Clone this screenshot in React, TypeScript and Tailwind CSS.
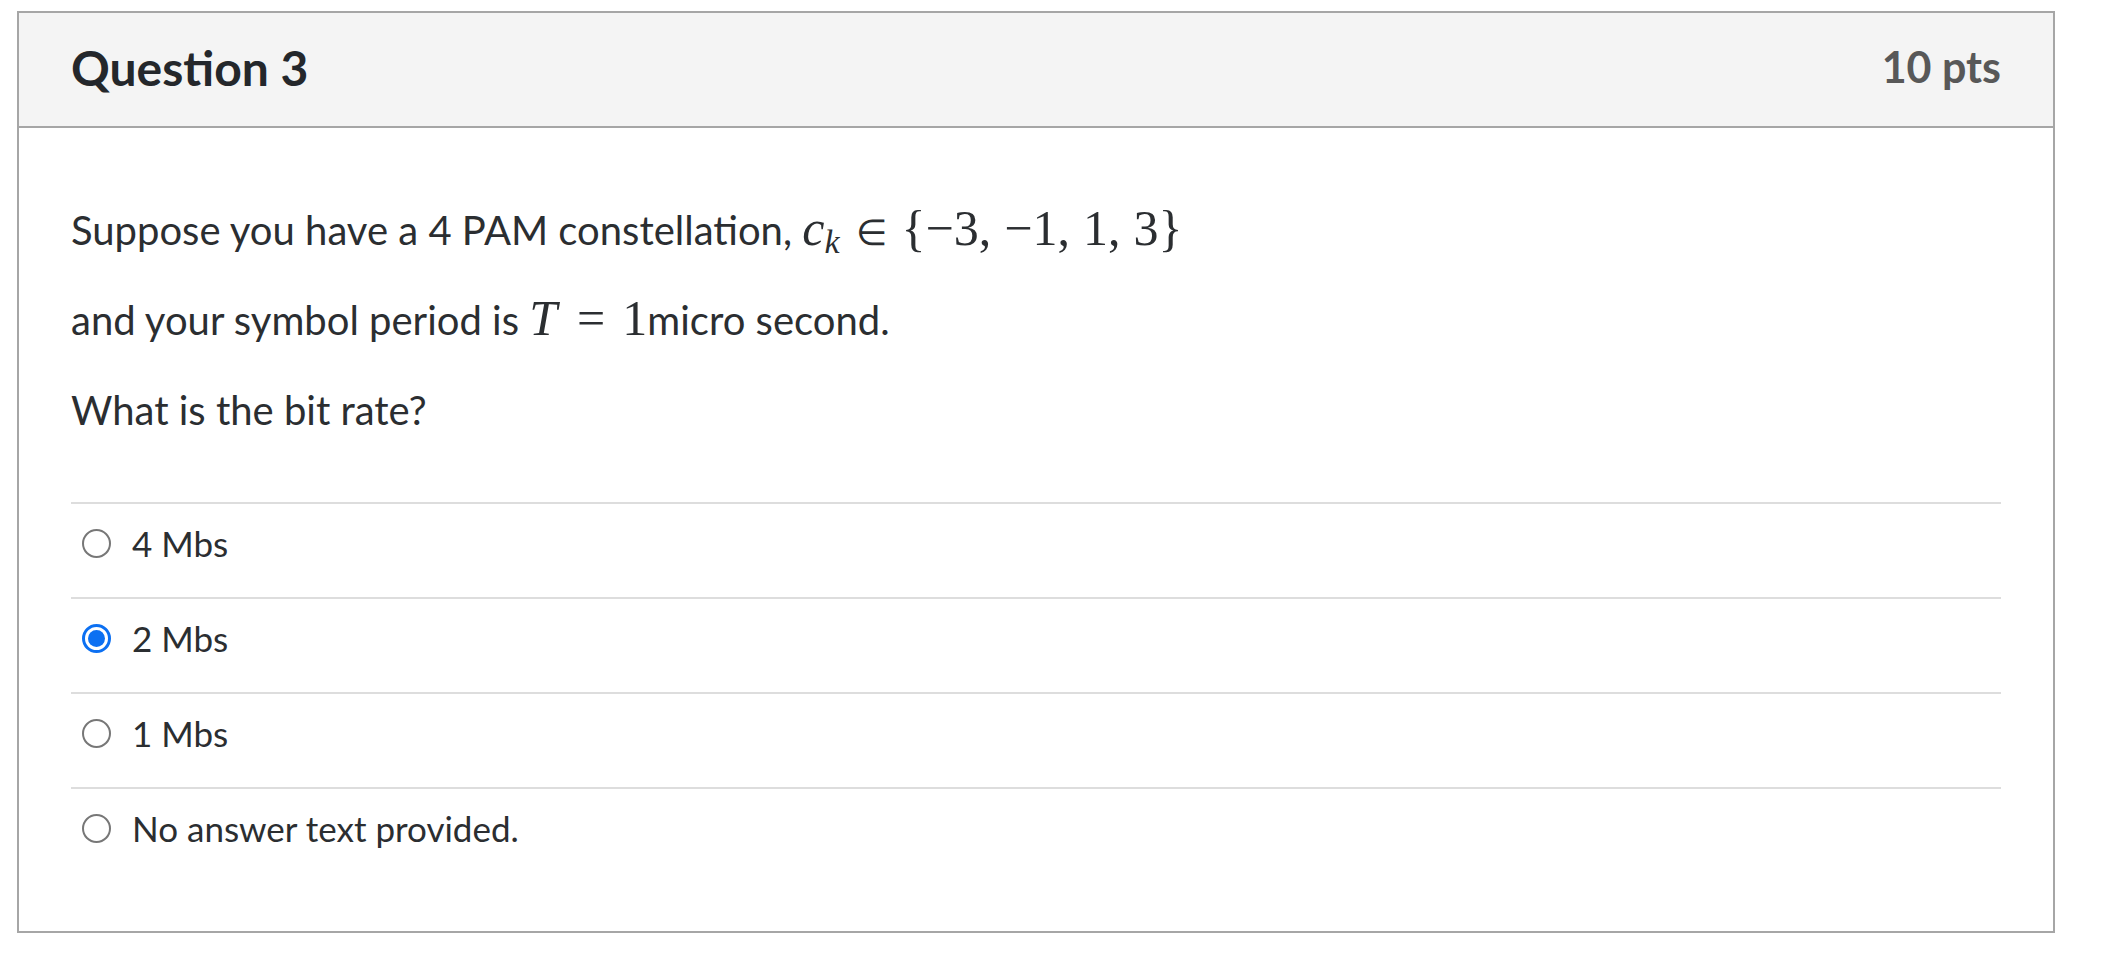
import React from "react";

const options = [
  { label: "4 Mbs", checked: false },
  { label: "2 Mbs", checked: true },
  { label: "1 Mbs", checked: false },
  { label: "No answer text provided.", checked: false },
];

function Radio({ checked }: { checked: boolean }) {
  if (checked) {
    return (
      <span className="flex h-[29px] w-[29px] shrink-0 items-center justify-center rounded-full border-[3px] border-[#0c70f2] bg-white">
        <span className="h-[17px] w-[17px] rounded-full bg-[#0c70f2]" />
      </span>
    );
  }
  return <span className="h-[29px] w-[29px] shrink-0 rounded-full border-2 border-[#777777] bg-white" />;
}

export default function App() {
  return (
    <div className="min-h-screen bg-white pl-[17px] pt-[11px] font-['Lato',sans-serif]">
      <div className="w-[2038px] border-2 border-[#a6a6a6]">
        <div className="flex h-[115px] items-center justify-between border-b-2 border-[#a6a6a6] bg-[#f4f4f4] px-[52px]">
          <h2 className="pb-[4px] text-[48px] font-bold text-[#24272b]">Question 3</h2>
          <span className="pb-[4px] text-[43px] font-bold text-[#585858]">10 pts</span>
        </div>

        <div className="px-[52px] pb-[49px] pt-[72px]">
          <div className="text-[40px] leading-[60px] text-[#2b2e31]">
            <p className="mb-[30px]">
              Suppose you have a 4 PAM constellation,{" "}
              <span className="font-['Liberation_Serif',serif] text-[50px] leading-none">
                <i>c</i>
                <i className="relative top-[8px] text-[34px]">k</i>
                <span className="ml-[16px] mr-[15px] text-[36px]">∈</span>
                <span>
                  {"{"}−3,<span className="ml-[13px]">−1,</span>
                  <span className="ml-[13px]">1,</span>
                  <span className="ml-[13px]">3</span>
                  {"}"}
                </span>
              </span>
            </p>
            <p className="mb-[30px]">
              and your symbol period is{" "}
              <span className="font-['Liberation_Serif',serif] text-[50px] leading-none">
                <i>T</i>
                <span className="ml-[20px] mr-[17px]">=</span>
                <span>1</span>
              </span>
              micro second.
            </p>
            <p>What is the bit rate?</p>
          </div>

          <div className="mt-[62px]">
            {options.map((o) => (
              <div
                key={o.label}
                className="flex h-[95px] items-center gap-[21px] border-t-2 border-[#dddddd] pb-[14px] pl-[11px] text-[35px] text-[#2b2e31]"
              >
                <Radio checked={o.checked} />
                <span>{o.label}</span>
              </div>
            ))}
          </div>
        </div>
      </div>
    </div>
  );
}
